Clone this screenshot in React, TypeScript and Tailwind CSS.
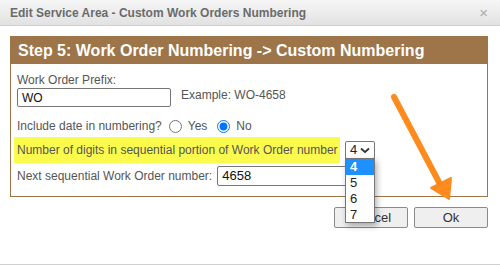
import React from "react";

export default function App() {
  return (
    <div
      className="relative w-[500px] h-[266px] bg-white overflow-hidden text-[#555]"
      style={{ fontFamily: '"Liberation Sans", Arial, sans-serif' }}
    >
      {/* Title bar */}
      <div className="h-[26px] flex items-center justify-between pl-[10px] pr-[12px] bg-gradient-to-b from-[#f6f6f6] to-[#e2e2e2] border-b border-[#cfcfcf]">
        <span className="text-[12px] font-bold text-[#6b6b6b]">
          Edit Service Area - Custom Work Orders Numbering
        </span>
        <span className="text-[15px] text-[#aaa] leading-none">×</span>
      </div>

      {/* Panel */}
      <div className="ml-[10px] mt-[10px] w-[478px] border border-[#9d7549]">
        <div className="h-[27px] bg-[#9d7549] flex items-center pl-[7px]">
          <span className="text-[16px] font-bold text-white">
            Step 5: Work Order Numbering -&gt; Custom Numbering
          </span>
        </div>
        <div className="pl-[3px] pt-[9px] pb-[10px] text-[12px]">
          <div className="flex items-end">
            <div className="flex flex-col pl-[3px]">
              <span className="leading-[14px]">Work Order Prefix:</span>
              <div className="mt-[1px] w-[154px] h-[19px] border border-[#767676] rounded-[2px] flex items-center pl-[4px] text-[#111]">
                WO
              </div>
            </div>
            <span className="ml-[10px] mb-[3px]">Example: WO-4658</span>
          </div>
          <div className="flex items-center mt-[11px] pl-[3px] h-[16px]">
            <span>Include date in numbering?</span>
            <input type="radio" name="d" className="ml-[7px] w-[13px] h-[13px] m-0" readOnly />
            <span className="ml-[6px]">Yes</span>
            <input type="radio" name="d" defaultChecked className="ml-[10px] w-[13px] h-[13px] m-0" />
            <span className="ml-[6px]">No</span>
          </div>
          <div className="flex items-center mt-[3px]">
            <div className="w-[326px] h-[26px] bg-[#fbfb4d] flex items-center pl-[3px]">
              Number of digits in sequential portion of Work Order number
            </div>
            <div className="ml-[5px] w-[30px] h-[18px] border border-[#767676] rounded-[2px] flex items-center pl-[4px] text-[13px] text-[#222]">
              <span>4</span>
              <svg width="10" height="7" viewBox="0 0 10 7" className="ml-[3px]">
                <path d="M1 1.5 L5 5 L9 1.5" stroke="#333" strokeWidth="1.8" fill="none" />
              </svg>
            </div>
          </div>
          <div className="flex items-center mt-[3px] pl-[3px]">
            <span>Next sequential Work Order number:</span>
            <div className="ml-[5px] w-[154px] h-[20px] border border-[#767676] rounded-[2px] flex items-center pl-[4px] text-[13px] text-[#111]">
              4658
            </div>
          </div>
        </div>
      </div>

      {/* Buttons */}
      <div className="flex justify-end gap-[6px] mt-[10px] mr-[12px]">
        <button className="w-[74px] h-[21px] border border-[#8a8a8a] rounded-[2px] bg-[#efefef] text-[13px] text-[#333]">
          Cancel
        </button>
        <button className="w-[74px] h-[21px] border border-[#8a8a8a] rounded-[2px] bg-[#efefef] text-[13px] text-[#333]">
          Ok
        </button>
      </div>

      {/* Bottom line */}
      <div className="absolute left-0 right-0 bottom-[1px] h-[1px] bg-[#cfcfcf]" />

      {/* Dropdown list */}
      <div className="absolute left-[345px] top-[158px] w-[30px] border border-[#767676] bg-white shadow-[2px_3px_6px_rgba(0,0,0,0.3)] text-[13px] text-[#222]">
        <div className="h-[16px] bg-[#1e90ff] text-white font-bold pl-[4px] leading-[16px]">4</div>
        <div className="h-[16px] pl-[4px] leading-[16px]">5</div>
        <div className="h-[16px] pl-[4px] leading-[16px]">6</div>
        <div className="h-[15px] pl-[4px] leading-[15px]">7</div>
      </div>

      {/* Orange arrow */}
      <svg className="absolute left-0 top-0" width="500" height="266" viewBox="0 0 500 266">
        <line x1="394" y1="97" x2="441" y2="186" stroke="#ff8a1d" strokeWidth="6" strokeLinecap="round" />
        <polygon points="431,188 451,178 449,199" fill="#ff8a1d" stroke="#ff8a1d" strokeWidth="2" strokeLinejoin="round" />
      </svg>
    </div>
  );
}
